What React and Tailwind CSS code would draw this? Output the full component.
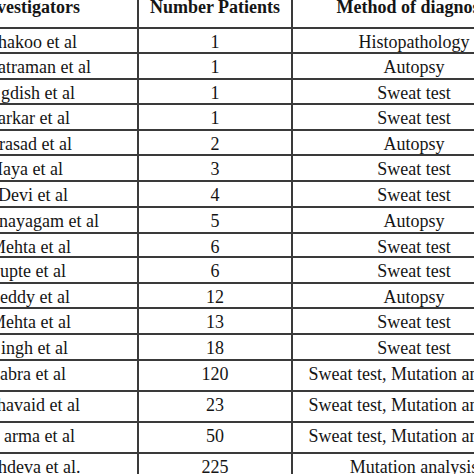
import React from 'react'

// visible slice of a wider table: first column is cut on the left, last on the right
const rows = [
  { name: 'hakoo et al', shift: '-ml-[2px]', n: '1', method: 'Histopathology', h: 'h-[25px] items-center' },
  { name: 'atraman et al', shift: '-ml-[2px]', n: '1', method: 'Autopsy', h: 'h-[26px] items-center' },
  { name: 'gdish et al', shift: 'ml-px', n: '1', method: 'Sweat test', h: 'h-[25px] items-center' },
  { name: 'arkar et al', shift: '-ml-[2px]', n: '1', method: 'Sweat test', h: 'h-[26px] items-center' },
  { name: 'rasad et al', shift: '-ml-[1px]', n: '2', method: 'Autopsy', h: 'h-[25px] items-center' },
  { name: 'Maya et al', shift: '-ml-[13px]', n: '3', method: 'Sweat test', h: 'h-[26px] items-center' },
  { name: 'Devi et al', shift: '-ml-[2px]', n: '4', method: 'Sweat test', h: 'h-[26px] items-center' },
  { name: 'nayagam et al', shift: '-ml-[1px]', n: '5', method: 'Autopsy', h: 'h-[26px] items-center' },
  { name: 'Mehta et al', shift: '-ml-[10px]', n: '6', method: 'Sweat test', h: 'h-[24px] items-center' },
  { name: 'upte et al', shift: 'ml-0', n: '6', method: 'Sweat test', h: 'h-[26px] items-center' },
  { name: 'eddy et al', shift: 'ml-0', n: '12', method: 'Autopsy', h: 'h-[25px] items-center' },
  { name: 'Mehta et al', shift: '-ml-[10px]', n: '13', method: 'Sweat test', h: 'h-[26px] items-center' },
  { name: 'ingh et al', shift: 'ml-px', n: '18', method: 'Sweat test', h: 'h-[26px] items-center' },
  { name: 'abra et al', shift: 'ml-0', n: '120', method: 'Sweat test, Mutation analysis', h: 'h-[31px] items-center' },
  { name: 'havaid et al', shift: '-ml-[3px]', n: '23', method: 'Sweat test, Mutation analysis', h: 'h-[31px] items-center' },
  { name: 'arma et al', shift: 'ml-[4px]', n: '50', method: 'Sweat test, Mutation analysis', h: 'h-[31px] items-center' },
  { name: 'hdeva et al.', shift: '-ml-[2px]', n: '225', method: 'Mutation analysis', h: 'h-[40px] items-start' },
]

const Row = ({ row }) => (
  <div className={`flex border-b-2 border-[#3a3a3a] ${row.h}`}>
    <div className="w-[139px] self-stretch shrink-0 border-r-2 border-[#3a3a3a] flex items-[inherit] overflow-hidden">
      <span className={`whitespace-nowrap ${row.shift}`}>{row.name}</span>
    </div>
    <div className="w-[154px] self-stretch shrink-0 border-r-2 border-[#3a3a3a] flex items-[inherit] justify-center">
      <span>{row.n}</span>
    </div>
    <div className="w-[242px] self-stretch shrink-0 flex items-[inherit] justify-center">
      <span className="whitespace-nowrap">{row.method}</span>
    </div>
  </div>
)

const App = () => {
  return (
    <div className="w-[474px] h-[474px] overflow-hidden bg-white text-[#151515] text-[18px] font-['Liberation_Serif','Times_New_Roman',serif]">
      <div className="w-[535px]">
        {/* Header */}
        <div className="flex h-[29px] border-b-2 border-[#3a3a3a] font-bold leading-[18px]">
          <div className="w-[139px] shrink-0 border-r-2 border-[#3a3a3a] overflow-hidden">
            <div className="-mt-[2px] -ml-[3px] whitespace-nowrap">vestigators</div>
          </div>
          <div className="w-[154px] shrink-0 border-r-2 border-[#3a3a3a] text-center">
            <div className="-mt-[2px] whitespace-nowrap">Number Patients</div>
          </div>
          <div className="w-[242px] shrink-0 text-center">
            <div className="-mt-[2px] whitespace-nowrap">Method of diagnosis</div>
          </div>
        </div>

        {rows.map((row, i) => (
          <Row key={i} row={row} />
        ))}
      </div>
    </div>
  )
}

export default App
